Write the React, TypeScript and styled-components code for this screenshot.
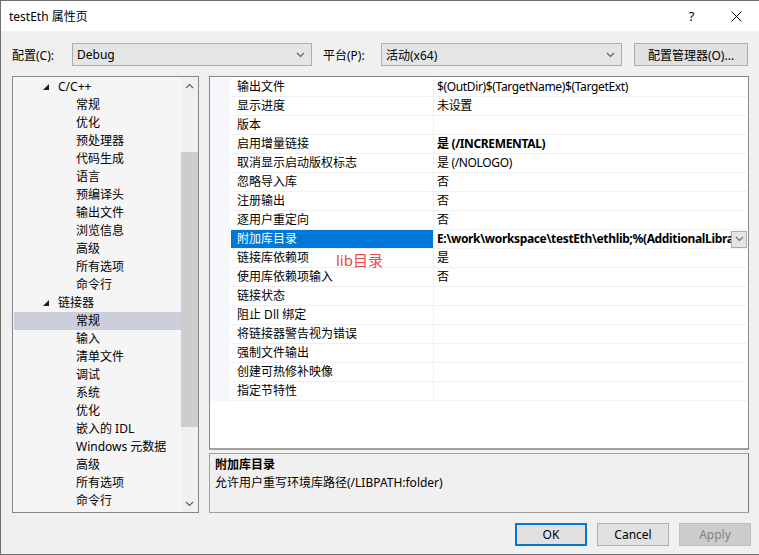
import React from 'react';
import styled, { createGlobalStyle } from 'styled-components';

const GlobalStyle = createGlobalStyle`
  html, body {
    margin: 0;
    padding: 0;
    background: #ffffff;
  }
  body {
    font-family: "Noto Sans", "Noto Sans CJK SC", sans-serif;
    font-size: 12px;
    color: #000;
  }
`;

const Window = styled.div`
  width: 759px;
  height: 555px;
  box-sizing: border-box;
  border: 1px solid #6f6f6f;
  border-right: none;
  background: #f0f0f0;
  display: flex;
  flex-direction: column;
  overflow: hidden;
`;

const TitleBar = styled.div`
  height: 30px;
  background: #ffffff;
  display: flex;
  align-items: center;
  padding-left: 8px;
  font-size: 12px;
`;

const TitleText = styled.div`
  flex: 1;
`;

const TitleButton = styled.div`
  width: 45px;
  height: 30px;
  display: flex;
  align-items: center;
  justify-content: center;
  font-size: 13px;
`;

const Body = styled.div`
  flex: 1;
  display: flex;
  flex-direction: column;
  padding: 12px 8px 0 11px;
`;

const Toolbar = styled.div`
  height: 23px;
  display: flex;
  align-items: center;
`;

const Label = styled.span<{ $width: number }>`
  width: ${({ $width }) => $width}px;
  white-space: nowrap;
`;

const Combo = styled.div<{ $width: number }>`
  width: ${({ $width }) => $width}px;
  height: 23px;
  box-sizing: border-box;
  border: 1px solid #adadad;
  background: #e5e5e5;
  display: flex;
  align-items: center;
  padding: 0 6px 0 4px;
  margin-right: 11px;
`;

const ComboText = styled.span`
  flex: 1;
`;

const ToolButton = styled.button`
  width: 114px;
  height: 23px;
  margin-left: 1px;
  box-sizing: border-box;
  border: 1px solid #adadad;
  background: #e1e1e1;
  font: inherit;
  padding: 0;
`;

const Main = styled.div`
  display: flex;
  gap: 10px;
  margin-top: 10px;
  height: 437px;
`;

const Tree = styled.div`
  width: 187px;
  box-sizing: border-box;
  border: 1px solid #828790;
  background: #f5f5f5;
  display: flex;
  overflow: hidden;
`;

const TreeList = styled.div`
  flex: 1;
  padding-top: 1px;
  padding-left: 1px;
`;

const TreeRow = styled.div<{ $level: number; $selected?: boolean }>`
  height: 18px;
  line-height: 18px;
  display: flex;
  align-items: center;
  padding-left: ${({ $level }) => ($level === 0 ? 29 : 62)}px;
  background: ${({ $selected }) => ($selected ? '#cccedb' : 'transparent')};
  white-space: nowrap;
`;

const Expander = styled.svg`
  width: 6px;
  height: 6px;
  margin-right: 9px;
`;

const ScrollBar = styled.div`
  width: 17px;
  background: #f0f0f0;
  display: flex;
  flex-direction: column;
`;

const ScrollArrow = styled.div`
  height: 17px;
  display: flex;
  align-items: center;
  justify-content: center;
`;

const ScrollTrack = styled.div`
  flex: 1;
  display: flex;
  flex-direction: column;
  padding: 58px 0 68px;
`;

const ScrollThumb = styled.div`
  flex: 1;
  background: #cdcdcd;
`;

const RightColumn = styled.div`
  width: 540px;
  display: flex;
  flex-direction: column;
  gap: 3px;
`;

const Grid = styled.div`
  position: relative;
  height: 374px;
  box-sizing: border-box;
  border: 1px solid #828790;
  border-bottom: 2px solid #a0a0a0;
  background: #ffffff;
  padding-top: 1px;
  padding-right: 1px;
`;

const GridRow = styled.div`
  display: grid;
  grid-template-columns: 20px 204px 1fr;
  height: 19px;
`;

const Gutter = styled.div`
  background: #f5f7fb;
`;

const NameCell = styled.div<{ $selected?: boolean }>`
  box-sizing: border-box;
  padding-left: 6px;
  margin-left: 1px;
  line-height: 18px;
  border-bottom: 1px solid #f0f0f0;
  border-right: 1px solid #f0f0f0;
  background: ${({ $selected }) => ($selected ? '#0078d7' : '#ffffff')};
  color: ${({ $selected }) => ($selected ? '#ffffff' : '#000000')};
  white-space: nowrap;
  overflow: hidden;
`;

const ValueCell = styled.div<{ $bold?: boolean }>`
  box-sizing: border-box;
  padding-left: 3px;
  line-height: 18px;
  border-bottom: 1px solid #f0f0f0;
  font-weight: ${({ $bold }) => ($bold ? 700 : 400)};
  letter-spacing: -0.35px;
  white-space: nowrap;
  overflow: hidden;
  display: flex;
  align-items: center;
`;

const ValueText = styled.span`
  flex: 1;
  overflow: hidden;
  white-space: nowrap;
`;

const DropButton = styled.div`
  width: 16px;
  height: 17px;
  box-sizing: border-box;
  border: 1px solid #acacac;
  background: #e5e5e5;
  display: flex;
  align-items: center;
  justify-content: center;
  flex-shrink: 0;
`;

const Annotation = styled.div`
  position: absolute;
  left: 126px;
  top: 172px;
  color: #e8474d;
  font-size: 15px;
  white-space: nowrap;
`;

const Description = styled.div`
  height: 60px;
  box-sizing: border-box;
  border: 1px solid #a0a0a0;
  border-right-color: #7a7a7a;
  padding: 2px 5px;
  line-height: 18px;
`;

const DescTitle = styled.div`
  font-weight: 700;
`;

const Footer = styled.div`
  display: flex;
  justify-content: flex-end;
  gap: 10px;
  margin-top: 10px;
`;

const DialogButton = styled.button<{ $variant?: 'default' | 'disabled' }>`
  width: 72px;
  height: 23px;
  box-sizing: border-box;
  padding: 0;
  font: inherit;
  background: ${({ $variant }) => ($variant === 'disabled' ? '#cccccc' : '#e1e1e1')};
  color: ${({ $variant }) => ($variant === 'disabled' ? '#838383' : '#000000')};
  border: ${({ $variant }) =>
    $variant === 'default'
      ? '2px solid #0078d7'
      : $variant === 'disabled'
        ? '1px solid #bfbfbf'
        : '1px solid #adadad'};
`;

const Chevron: React.FC<{ up?: boolean; color?: string }> = ({ up, color = '#606060' }) => (
  <svg width="9" height="6" viewBox="0 0 9 6">
    <polyline
      points={up ? '1,5 4.5,1.5 8,5' : '1,1 4.5,4.5 8,1'}
      fill="none"
      stroke={color}
      strokeWidth="1.2"
    />
  </svg>
);

const treeItems: { label: string; level: number; selected?: boolean }[] = [
  { label: 'C/C++', level: 0 },
  { label: '常规', level: 1 },
  { label: '优化', level: 1 },
  { label: '预处理器', level: 1 },
  { label: '代码生成', level: 1 },
  { label: '语言', level: 1 },
  { label: '预编译头', level: 1 },
  { label: '输出文件', level: 1 },
  { label: '浏览信息', level: 1 },
  { label: '高级', level: 1 },
  { label: '所有选项', level: 1 },
  { label: '命令行', level: 1 },
  { label: '链接器', level: 0 },
  { label: '常规', level: 1, selected: true },
  { label: '输入', level: 1 },
  { label: '清单文件', level: 1 },
  { label: '调试', level: 1 },
  { label: '系统', level: 1 },
  { label: '优化', level: 1 },
  { label: '嵌入的 IDL', level: 1 },
  { label: 'Windows 元数据', level: 1 },
  { label: '高级', level: 1 },
  { label: '所有选项', level: 1 },
  { label: '命令行', level: 1 },
];

const properties: { name: string; value: string; bold?: boolean; selected?: boolean }[] = [
  { name: '输出文件', value: '$(OutDir)$(TargetName)$(TargetExt)' },
  { name: '显示进度', value: '未设置' },
  { name: '版本', value: '' },
  { name: '启用增量链接', value: '是 (/INCREMENTAL)', bold: true },
  { name: '取消显示启动版权标志', value: '是 (/NOLOGO)' },
  { name: '忽略导入库', value: '否' },
  { name: '注册输出', value: '否' },
  { name: '逐用户重定向', value: '否' },
  {
    name: '附加库目录',
    value: 'E:\\work\\workspace\\testEth\\ethlib;%(AdditionalLibraryDirectories)',
    bold: true,
    selected: true,
  },
  { name: '链接库依赖项', value: '是' },
  { name: '使用库依赖项输入', value: '否' },
  { name: '链接状态', value: '' },
  { name: '阻止 Dll 绑定', value: '' },
  { name: '将链接器警告视为错误', value: '' },
  { name: '强制文件输出', value: '' },
  { name: '创建可热修补映像', value: '' },
  { name: '指定节特性', value: '' },
];

export default function App() {
  return (
    <>
      <GlobalStyle />
      <Window>
        <TitleBar>
          <TitleText>testEth 属性页</TitleText>
          <TitleButton>?</TitleButton>
          <TitleButton>
            <svg width="11" height="11" viewBox="0 0 11 11">
              <path d="M0.5 0.5 L10.5 10.5 M10.5 0.5 L0.5 10.5" stroke="#000" strokeWidth="1" />
            </svg>
          </TitleButton>
        </TitleBar>
        <Body>
          <Toolbar>
            <Label $width={60}>配置(C):</Label>
            <Combo $width={240}>
              <ComboText>Debug</ComboText>
              <Chevron />
            </Combo>
            <Label $width={58}>平台(P):</Label>
            <Combo $width={241}>
              <ComboText>活动(x64)</ComboText>
              <Chevron />
            </Combo>
            <ToolButton>配置管理器(O)...</ToolButton>
          </Toolbar>
          <Main>
            <Tree>
              <TreeList>
                {treeItems.map((item, i) => (
                  <TreeRow key={i} $level={item.level} $selected={item.selected}>
                    {item.level === 0 && (
                      <Expander viewBox="0 0 6 6">
                        <polygon points="6,0 6,6 0,6" fill="#1e1e1e" />
                      </Expander>
                    )}
                    {item.label}
                  </TreeRow>
                ))}
              </TreeList>
              <ScrollBar>
                <ScrollArrow>
                  <Chevron up />
                </ScrollArrow>
                <ScrollTrack>
                  <ScrollThumb />
                </ScrollTrack>
                <ScrollArrow>
                  <Chevron />
                </ScrollArrow>
              </ScrollBar>
            </Tree>
            <RightColumn>
              <Grid>
                {properties.map((p, i) => (
                  <GridRow key={i}>
                    <Gutter />
                    <NameCell $selected={p.selected}>{p.name}</NameCell>
                    <ValueCell $bold={p.bold}>
                      <ValueText>{p.value}</ValueText>
                      {p.selected && (
                        <DropButton>
                          <Chevron color="#707070" />
                        </DropButton>
                      )}
                    </ValueCell>
                  </GridRow>
                ))}
                <Annotation>lib目录</Annotation>
              </Grid>
              <Description>
                <DescTitle>附加库目录</DescTitle>
                <div>允许用户重写环境库路径(/LIBPATH:folder)</div>
              </Description>
            </RightColumn>
          </Main>
          <Footer>
            <DialogButton $variant="default">OK</DialogButton>
            <DialogButton>Cancel</DialogButton>
            <DialogButton $variant="disabled">Apply</DialogButton>
          </Footer>
        </Body>
      </Window>
    </>
  );
}
